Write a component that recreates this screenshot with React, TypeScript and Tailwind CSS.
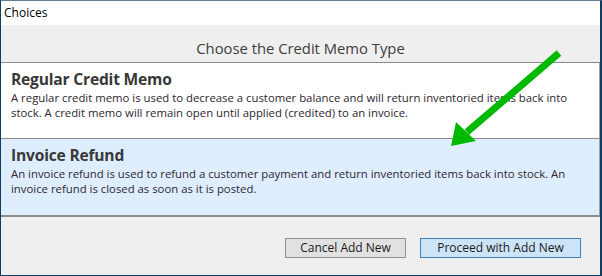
import React from "react";

const Choice = (props: { title: string; lines: string[]; selected?: boolean }) => {
  return (
    <div
      className={
        "pl-[10px] pt-[5px] border-r border-[#a0a0a0] " +
        (props.selected ? "h-[76px] bg-[#dfeeff]" : "h-[75px] bg-white")
      }
    >
      <div className="text-[15.6px] leading-[22px] font-bold text-[#383838] tracking-[-0.2px]">{props.title}</div>
      <p className="text-[11.35px] leading-[15px] text-[#2e2630]">
        {props.lines.map((l, i) => (
          <React.Fragment key={i}>
            {l}
            {i < props.lines.length - 1 && <br />}
          </React.Fragment>
        ))}
      </p>
    </div>
  );
};

export default function App() {
  return (
    <div className="relative w-[602px] h-[276px] flex flex-col border-l border-b border-r-2 border-t border-[#0e3d63] border-t-[#5f7f98] bg-white font-['Open_Sans',sans-serif]">
      {/* title bar */}
      <div className="h-[24px] shrink-0 pl-[3px] flex items-center bg-white text-[12px] text-black">Choices</div>

      {/* header */}
      <div className="h-[38px] shrink-0 bg-[#efefef] border-b border-[#8a8a8a] flex items-end justify-center pb-[4px] text-[14.8px] leading-[20px] text-[#3c3c3c]">
        Choose the Credit Memo Type
      </div>

      <div className="border-b border-[#8a8a8a]">
        <Choice
          title="Regular Credit Memo"
          lines={[
            "A regular credit memo is used to decrease a customer balance and will return inventoried items back into",
            "stock. A credit memo will remain open until applied (credited) to an invoice.",
          ]}
        />
      </div>
      <div className="border-b-2 border-[#8c8c8c]">
        <Choice
          selected
          title="Invoice Refund"
          lines={[
            "An invoice refund is used to refund a customer payment and return inventoried items back into stock. An",
            "invoice refund is closed as soon as it is posted.",
          ]}
        />
      </div>

      {/* footer */}
      <div className="flex-1 bg-[#efefef] flex justify-end items-start gap-[14px] pt-[21px] pr-[19px]">
        <button className="w-[121px] h-[20px] bg-[#e1e1e1] border border-[#8f8f8f] text-[12px] leading-[18px] text-[#1a1a1a]">
          Cancel Add New
        </button>
        <button className="w-[161px] h-[20px] bg-[#cce4f7] border border-[#3d83be] text-[12px] leading-[18px] text-[#1a1a1a]">
          Proceed with Add New
        </button>
      </div>

      {/* green pointer arrow */}
      <svg className="absolute left-[-1px] top-[-1px] pointer-events-none" width="602" height="276" viewBox="0 0 602 276">
        <line x1="559" y1="53" x2="467" y2="132" stroke="#00b900" strokeWidth="7" />
        <polygon points="451,146 456,122 476,141" fill="#00b900" />
      </svg>
    </div>
  );
}
